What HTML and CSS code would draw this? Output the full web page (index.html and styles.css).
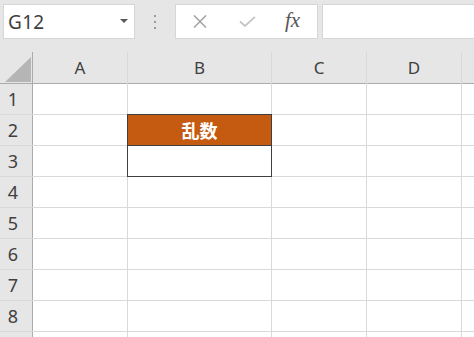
FILE: index.html
```html
<!DOCTYPE html>
<html lang="ja">
<head>
    <meta charset="UTF-8">
    <meta name="viewport" content="width=device-width, initial-scale=1.0">
    <title>乱数 - Sheet</title>
    <link rel="stylesheet" href="styles.css">
</head>
<body>
    <div class="formula-bar">
        <div class="name-box">
            <span class="name-text">G12</span>
            <span class="name-arrow" aria-hidden="true"></span>
        </div>
        <div class="grip" aria-hidden="true">
            <span></span><span></span><span></span>
        </div>
        <div class="formula-buttons">
            <svg class="btn-icon" width="14" height="13" viewBox="0 0 14 13" aria-label="Cancel">
                <path d="M1 0.5 L13 12.5 M13 0.5 L1 12.5" stroke="#a6a6a6" stroke-width="1.6" fill="none"/>
            </svg>
            <svg class="btn-icon" width="17" height="11" viewBox="0 0 17 11" aria-label="Enter">
                <path d="M1 5.5 L6 10 L16 0.8" stroke="#c4c4c4" stroke-width="1.8" fill="none"/>
            </svg>
            <span class="fx">fx</span>
        </div>
        <div class="formula-input"></div>
    </div>

    <div class="sheet">
        <div class="corner"><span class="corner-tri"></span></div>
        <div class="col-head">A</div>
        <div class="col-head">B</div>
        <div class="col-head">C</div>
        <div class="col-head">D</div>
        <div class="col-head"></div>

        <div class="row-head">1</div>
        <div class="cell"></div><div class="cell"></div><div class="cell"></div><div class="cell"></div><div class="cell"></div>

        <div class="row-head">2</div>
        <div class="cell"></div><div class="cell title">乱数</div><div class="cell"></div><div class="cell"></div><div class="cell"></div>

        <div class="row-head">3</div>
        <div class="cell"></div><div class="cell boxed"></div><div class="cell"></div><div class="cell"></div><div class="cell"></div>

        <div class="row-head">4</div>
        <div class="cell"></div><div class="cell"></div><div class="cell"></div><div class="cell"></div><div class="cell"></div>

        <div class="row-head">5</div>
        <div class="cell"></div><div class="cell"></div><div class="cell"></div><div class="cell"></div><div class="cell"></div>

        <div class="row-head">6</div>
        <div class="cell"></div><div class="cell"></div><div class="cell"></div><div class="cell"></div><div class="cell"></div>

        <div class="row-head">7</div>
        <div class="cell"></div><div class="cell"></div><div class="cell"></div><div class="cell"></div><div class="cell"></div>

        <div class="row-head">8</div>
        <div class="cell"></div><div class="cell"></div><div class="cell"></div><div class="cell"></div><div class="cell"></div>

        <div class="row-head"></div>
        <div class="cell"></div><div class="cell"></div><div class="cell"></div><div class="cell"></div><div class="cell"></div>
    </div>
</body>
</html>
```

FILE: styles.css
```css
body {
    margin: 0;
    padding: 0;
    height: 337px;
    overflow: hidden;
    background-color: #e6e6e6;
    font-family: "Noto Sans", "Noto Sans CJK JP", sans-serif;
    color: #404040;
}

/* Name box + formula bar */
.formula-bar {
    display: flex;
    align-items: flex-start;
    height: 52px;
    padding: 4px 0 0 3px;
    box-sizing: border-box;
}

.name-box {
    display: flex;
    align-items: center;
    justify-content: space-between;
    width: 132px;
    height: 35px;
    box-sizing: border-box;
    padding: 0 6px 0 4px;
    background-color: #fff;
    border: 1px solid #d6d6d6;
}

.name-text {
    font-size: 19px;
    color: #404040;
    letter-spacing: 0.3px;
}

.name-arrow {
    width: 0;
    height: 0;
    border-left: 4px solid transparent;
    border-right: 4px solid transparent;
    border-top: 4px solid #595959;
    margin-top: -2px;
}

.grip {
    display: flex;
    flex-direction: column;
    gap: 4px;
    width: 40px;
    align-items: center;
    padding-top: 11px;
}

.grip span {
    width: 2px;
    height: 2px;
    background-color: #9a9a9a;
}

.formula-buttons {
    display: flex;
    align-items: center;
    width: 143px;
    height: 35px;
    box-sizing: border-box;
    background-color: #fff;
    border: 1px solid #d6d6d6;
    padding-left: 17px;
}

.btn-icon {
    display: block;
}

.btn-icon + .btn-icon {
    margin-left: 32px;
}

.fx {
    margin-left: 29px;
    font-family: "Liberation Serif", serif;
    font-style: italic;
    font-size: 21px;
    color: #555;
    margin-top: -3px;
}

.formula-input {
    flex: 1;
    height: 35px;
    margin-left: 4px;
    background-color: #fff;
    border: 1px solid #d6d6d6;
    border-right: none;
    box-sizing: border-box;
}

/* Grid */
.sheet {
    display: grid;
    grid-template-columns: 32px 94px 143px 94px 94px 1fr;
    grid-template-rows: 31px repeat(9, 30px);
    gap: 1px;
    background-color: #d9d9d9;
}

.corner,
.col-head,
.row-head {
    background-color: #e6e6e6;
}

.corner {
    display: flex;
    align-items: flex-end;
    justify-content: flex-end;
    padding: 0 1px 1px 0;
    box-shadow: 1px 0 0 #ababab, 0 1px 0 #ababab, 1px 1px 0 #ababab;
}

.corner-tri {
    width: 0;
    height: 0;
    border-left: 26px solid transparent;
    border-bottom: 25px solid #b5b5b5;
}

.col-head {
    display: flex;
    align-items: center;
    justify-content: center;
    font-size: 17px;
    color: #404040;
    box-shadow: 0 1px 0 #ababab;
}

.row-head {
    display: flex;
    align-items: center;
    justify-content: center;
    padding-right: 6px;
    font-size: 18px;
    color: #404040;
    box-shadow: 1px 0 0 #ababab;
}

.cell {
    background-color: #fff;
}

.title {
    display: flex;
    align-items: center;
    justify-content: center;
    background-color: #c55a11;
    color: #fff;
    font-family: "Noto Sans CJK JP", sans-serif;
    font-weight: bold;
    font-size: 18px;
    box-shadow: 0 0 0 1px #3f3f3f;
}

.boxed {
    box-shadow: 0 0 0 1px #3f3f3f;
}
```
